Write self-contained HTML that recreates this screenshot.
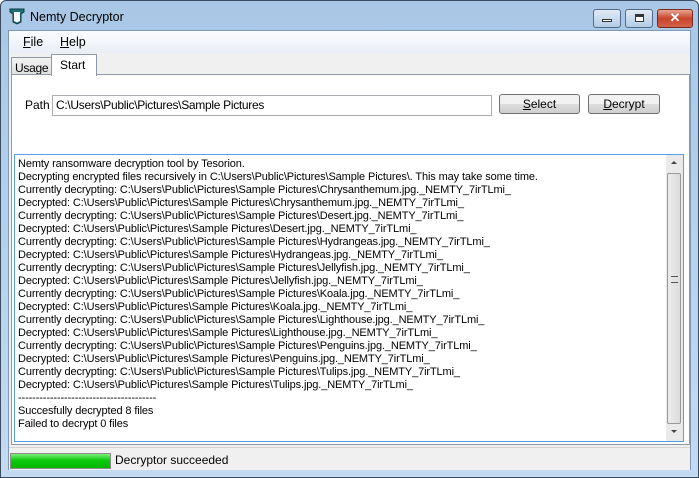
<!DOCTYPE html>
<html><head><style>
*{margin:0;padding:0;box-sizing:border-box}
body{width:699px;height:478px;overflow:hidden;background:#fff;font-family:"Liberation Sans",sans-serif;font-size:12px;color:#000;position:relative}
.frame{position:absolute;left:0;top:0;width:699px;height:478px;background:linear-gradient(#a9c7e6,#b9d3ee 60%,#c4daf2);border:1px solid #3b4c60;border-radius:6px 6px 0 0}
.title{position:absolute;left:30px;top:10px;font-size:12.5px;color:#000}
.client{position:absolute;left:8px;top:30px;width:683px;height:440px;background:#f0f0f0;border:1px solid #7e98b5}
.menu{position:absolute;left:0;top:0;width:681px;height:22px;background:linear-gradient(#fbfcfe,#e9eef5)}
.menu span{position:absolute;top:4px;font-size:12.5px}
.tabs{position:absolute;left:0;top:22px;width:681px;height:22px}
.tab{position:absolute;border:1px solid #8d99a8;border-bottom:none;font-size:12px}
.panel{position:absolute;left:2px;top:43px;width:679px;height:371px;background:#fff;border:1px solid #8d99a8}
.btn{position:absolute;height:20px;border:1px solid #707070;border-radius:3px;background:linear-gradient(#f2f2f2 50%,#dddddd 50%,#cfcfcf);text-align:center;font-size:12px;line-height:18px}
.log{position:absolute;left:2px;top:79px;width:670px;height:288px;border:1px solid #569de5;background:#fff;overflow:hidden}
.log pre{font-family:"Liberation Sans",sans-serif;font-size:11px;letter-spacing:-0.12px;line-height:13px;padding:3px 0 0 3px;white-space:pre}
.sb{position:absolute;right:0;top:0;width:17px;height:286px;background:#eaeaea}
.thumb{position:absolute;left:1px;top:18px;width:14px;height:251px;border:1px solid #999;border-radius:2px;background:linear-gradient(90deg,#ececec,#dcdcdc)}
.status{position:absolute;left:0;top:416px;width:681px;height:23px;background:#f0f0f0;border-top:1px solid #d5d5d5}
.wb{position:absolute;top:9px;height:19px;border:1px solid #506a8a;border-radius:3px}
</style></head><body>
<div class="frame"></div>
<svg style="position:absolute;left:8px;top:7px" width="18" height="18" viewBox="0 0 18 18"><path d="M2 2h14v3l-3 2v8l-4 2-4-2V7L2 5z" fill="#1d6f7a" stroke="#0c3a40"/><path d="M6 5h6v9l-3 1.5-3-1.5z" fill="#fff"/></svg>
<div class="title">Nemty Decryptor</div>
<div class="wb" style="left:593px;width:28px;background:linear-gradient(#e0ebf7,#b4cbe6)"><div style="position:absolute;left:8px;top:9px;width:10px;height:3px;border:1px solid #333;background:#fff"></div></div>
<div class="wb" style="left:625px;width:28px;background:linear-gradient(#e0ebf7,#b4cbe6)"><div style="position:absolute;left:9px;top:4px;width:9px;height:8px;border:1px solid #333;border-top-width:3px;background:#fff"></div></div>
<div class="wb" style="left:657px;width:36px;background:linear-gradient(#e9a592,#c8452c 50%,#d2624a);border-color:#7b2a1a;color:#fff;font-weight:bold;text-align:center;font-size:13px;line-height:16px">✕</div>
<div class="client">
 <div class="menu"><span style="left:14px"><u>F</u>ile</span><span style="left:51px"><u>H</u>elp</span></div>
 <div class="tabs">
  <div class="tab" style="left:2px;top:4px;width:41px;height:19px;background:linear-gradient(#f2f2f2,#dedede);padding:3px 0 0 3px;letter-spacing:-0.3px">Usage</div>
  <div class="tab" style="left:42px;top:1px;width:46px;height:22px;background:#fff;padding:3px 0 0 8px;z-index:2">Start</div>
 </div>
 <div class="panel">
  <div style="position:absolute;left:13px;top:23px">Path</div>
  <div style="position:absolute;left:40px;top:20px;width:440px;height:21px;border:1px solid #abadb3;padding:2px 0 0 3px;font-size:12px;letter-spacing:-0.3px">C:\Users\Public\Pictures\Sample Pictures</div>
  <div class="btn" style="left:487px;top:19px;width:81px"><u>S</u>elect</div>
  <div class="btn" style="left:576px;top:19px;width:72px"><u>D</u>ecrypt</div>
  <div class="log"><pre>Nemty ransomware decryption tool by Tesorion.
Decrypting encrypted files recursively in C:\Users\Public\Pictures\Sample Pictures\. This may take some time.
Currently decrypting: C:\Users\Public\Pictures\Sample Pictures\Chrysanthemum.jpg._NEMTY_7irTLmi_
Decrypted: C:\Users\Public\Pictures\Sample Pictures\Chrysanthemum.jpg._NEMTY_7irTLmi_
Currently decrypting: C:\Users\Public\Pictures\Sample Pictures\Desert.jpg._NEMTY_7irTLmi_
Decrypted: C:\Users\Public\Pictures\Sample Pictures\Desert.jpg._NEMTY_7irTLmi_
Currently decrypting: C:\Users\Public\Pictures\Sample Pictures\Hydrangeas.jpg._NEMTY_7irTLmi_
Decrypted: C:\Users\Public\Pictures\Sample Pictures\Hydrangeas.jpg._NEMTY_7irTLmi_
Currently decrypting: C:\Users\Public\Pictures\Sample Pictures\Jellyfish.jpg._NEMTY_7irTLmi_
Decrypted: C:\Users\Public\Pictures\Sample Pictures\Jellyfish.jpg._NEMTY_7irTLmi_
Currently decrypting: C:\Users\Public\Pictures\Sample Pictures\Koala.jpg._NEMTY_7irTLmi_
Decrypted: C:\Users\Public\Pictures\Sample Pictures\Koala.jpg._NEMTY_7irTLmi_
Currently decrypting: C:\Users\Public\Pictures\Sample Pictures\Lighthouse.jpg._NEMTY_7irTLmi_
Decrypted: C:\Users\Public\Pictures\Sample Pictures\Lighthouse.jpg._NEMTY_7irTLmi_
Currently decrypting: C:\Users\Public\Pictures\Sample Pictures\Penguins.jpg._NEMTY_7irTLmi_
Decrypted: C:\Users\Public\Pictures\Sample Pictures\Penguins.jpg._NEMTY_7irTLmi_
Currently decrypting: C:\Users\Public\Pictures\Sample Pictures\Tulips.jpg._NEMTY_7irTLmi_
Decrypted: C:\Users\Public\Pictures\Sample Pictures\Tulips.jpg._NEMTY_7irTLmi_
---------------------------------------
Succesfully decrypted 8 files
Failed to decrypt 0 files</pre>
   <div class="sb"><div style="position:absolute;left:5px;top:6px;border:3px solid transparent;border-bottom:3px solid #444;border-top:none;width:0"></div><div class="thumb"><div style="position:absolute;left:3px;top:102px;width:7px;height:7px;border-top:1px solid #555;border-bottom:1px solid #555"></div></div><div style="position:absolute;left:5px;top:275px;border:3px solid transparent;border-top:3px solid #444;border-bottom:none;width:0"></div></div>
  </div>
 </div>
 <div class="status">
  <div style="position:absolute;left:1px;top:5px;width:101px;height:16px;border:1px solid #8c8c8c;background:linear-gradient(#7ef07e,#0dc80d 45%,#04b804)"></div>
  <div style="position:absolute;left:106px;top:5px;font-size:12px">Decryptor succeeded</div>
 </div>
</div>
</body></html>
